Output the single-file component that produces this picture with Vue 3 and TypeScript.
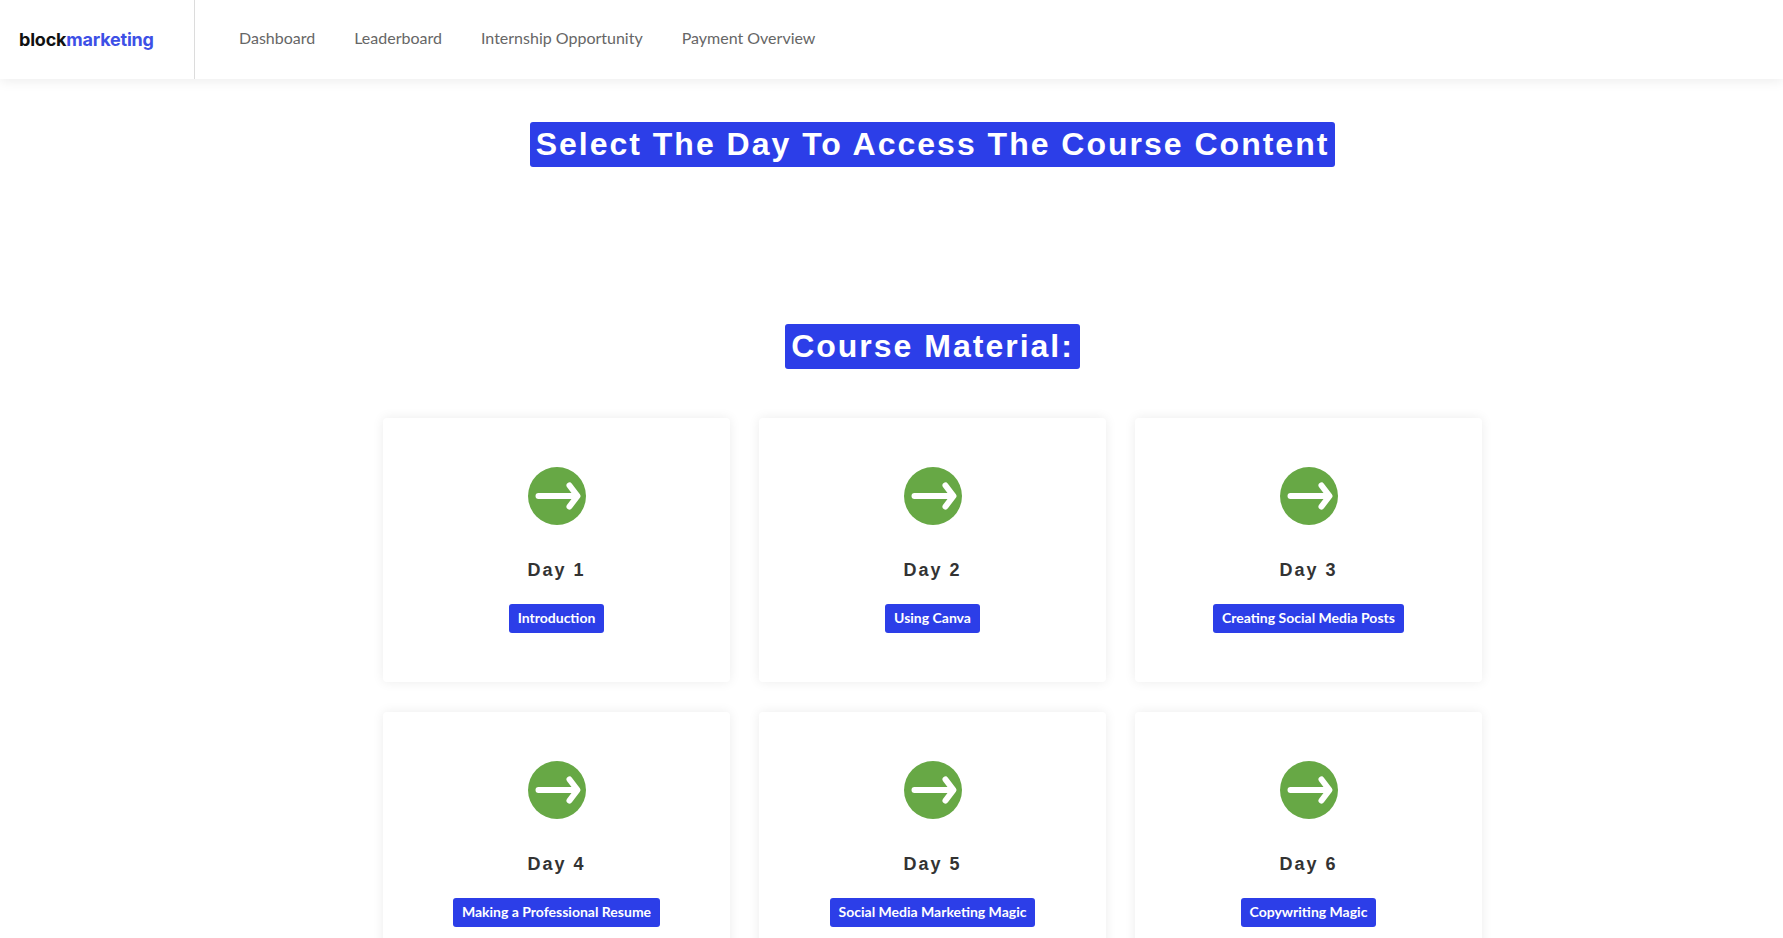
<script setup lang="ts">
interface CourseDay {
  day: number;
  title: string;
}

const navLinks: string[] = ['Dashboard', 'Leaderboard', 'Internship Opportunity', 'Payment Overview'];

const days: CourseDay[] = [
  { day: 1, title: 'Introduction' },
  { day: 2, title: 'Using Canva' },
  { day: 3, title: 'Creating Social Media Posts' },
  { day: 4, title: 'Making a Professional Resume' },
  { day: 5, title: 'Social Media Marketing Magic' },
  { day: 6, title: 'Copywriting Magic' }
];
</script>

<template>
  <div class="page">
    <header class="topbar">
      <div class="brand"><span class="brand-dark">block</span><span class="brand-blue">marketing</span></div>
      <nav class="nav">
        <a v-for="link in navLinks" :key="link" class="nav-link" href="#">{{ link }}</a>
      </nav>
    </header>

    <main class="content">
      <h1 class="badge-title first">Select The Day To Access The Course Content</h1>
      <h2 class="badge-title second">Course Material:</h2>

      <section class="grid">
        <article v-for="item in days" :key="item.day" class="card">
          <svg class="go-icon" viewBox="0 0 58 58" width="58" height="58">
            <circle cx="29" cy="29" r="29" fill="#67a845" />
            <path d="M10.5 29H48M41.5 18.5L49.5 29L41.5 39.5" fill="none" stroke="#fff" stroke-width="6" stroke-linecap="round" stroke-linejoin="round" />
          </svg>
          <h3 class="day-label">Day {{ item.day }}</h3>
          <a class="day-btn" href="#">{{ item.title }}</a>
        </article>
      </section>
    </main>
  </div>
</template>

<style>
html,
body {
  margin: 0;
  height: 100%;
  overflow: hidden;
  background: #fff;
}
</style>

<style scoped>
.page {
  font-family: "Lato", "Noto Sans", sans-serif;
  color: #333;
}

.topbar {
  display: flex;
  align-items: stretch;
  height: 79px;
  background: #fff;
  box-shadow: 0 2px 12px rgba(0, 0, 0, 0.08);
}

.brand {
  display: flex;
  align-items: center;
  width: 175px;
  padding-left: 19px;
  border-right: 1px solid #dcdcdc;
  font-family: "Inter", sans-serif;
  font-size: 18px;
  font-weight: 700;
  letter-spacing: -0.2px;
}

.brand-dark {
  color: #111;
}

.brand-blue {
  color: #3d50e6;
}

.nav {
  display: flex;
  align-items: center;
  gap: 39px;
  padding-left: 44px;
  padding-bottom: 4px;
}

.nav-link {
  font-size: 16px;
  color: #666;
  text-decoration: none;
}

.content {
  display: flex;
  flex-direction: column;
  align-items: center;
  padding-left: 82px;
}

.badge-title {
  margin: 0;
  padding: 0 6px;
  height: 45px;
  line-height: 45px;
  border-radius: 3px;
  background: #2c3ee8;
  color: #fff;
  font-family: "Liberation Sans", Arial, sans-serif;
  font-size: 32px;
  font-weight: 700;
  letter-spacing: 2px;
  white-space: nowrap;
}

.first {
  margin-top: 43px;
}

.second {
  margin-top: 157px;
}

.grid {
  display: grid;
  grid-template-columns: repeat(3, 347px);
  column-gap: 29px;
  row-gap: 30px;
  margin-top: 49px;
}

.card {
  display: flex;
  flex-direction: column;
  align-items: center;
  height: 264px;
  box-sizing: border-box;
  padding-top: 49px;
  background: #fff;
  border-radius: 4px;
  box-shadow: 0 0 12px rgba(0, 0, 0, 0.08);
}

.go-icon {
  display: block;
}

.day-label {
  margin: 33px 0 0;
  height: 24px;
  line-height: 24px;
  font-family: "Liberation Sans", Arial, sans-serif;
  font-size: 18px;
  font-weight: 700;
  letter-spacing: 2px;
  color: #333;
}

.day-btn {
  margin-top: 22px;
  height: 29px;
  line-height: 27px;
  padding: 0 9px;
  border-radius: 3px;
  background: #2c3ee8;
  color: #fff;
  font-size: 14px;
  font-weight: 700;
  text-decoration: none;
}
</style>
